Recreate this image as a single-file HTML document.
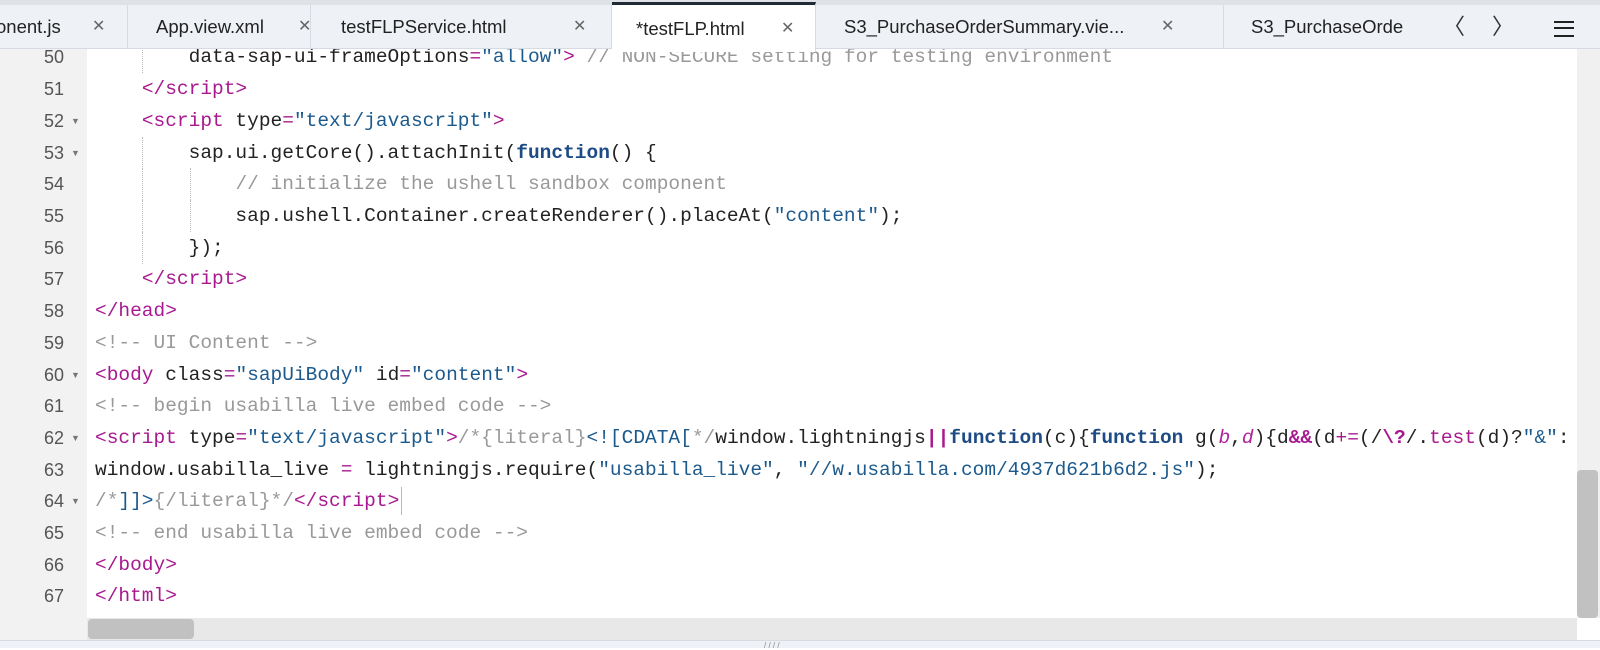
<!DOCTYPE html>
<html><head><meta charset="utf-8"><style>
body{margin:0;width:1600px;height:647px;overflow:hidden;background:#fff;position:relative;font-family:"Liberation Sans",sans-serif}
.top{position:absolute;left:0;top:0;width:1600px;height:5px;background:#dfe3e8}
.tabs{position:absolute;left:0;top:5px;width:1600px;height:43px;background:#eef1f5;border-bottom:1px solid #d6dbe1;z-index:5}
.tab{position:absolute;top:0;height:43px;border-right:1px solid #d6dbe1;font-size:18.5px;color:#222;line-height:43px;white-space:nowrap;overflow:hidden}
.tab .x{color:#666;font-size:16px;position:absolute;top:0}
.act{background:#fff;border-top:3px solid #1f2a36;top:-3px;height:47px;line-height:47px}
.code{position:absolute;left:0;top:41px;width:1577px;height:577px;overflow:hidden}
.gut{position:absolute;left:0;top:0;width:87px;height:577px;background:#f2f2f2}
.ln{position:absolute;left:0;height:32px;line-height:32px;font-family:"Liberation Sans",sans-serif;font-size:18px;color:#555;width:64px;text-align:right}
.fa{position:absolute;left:71px;font-size:9px;color:#777;height:32px;line-height:32px}
.l{position:absolute;left:95px;height:32px;line-height:32px;font-family:"Liberation Mono",monospace;font-size:19.5px;color:#222;white-space:pre}
.t{color:#a8198f}.s{color:#1c5a8d}.c{color:#999}.k{color:#1d4b86;font-weight:bold}.m{color:#a8198f;font-weight:bold}.i{color:#b0219c;font-style:italic}
.g{position:absolute;width:0;border-left:1px dotted #bbb;height:32px}
</style></head><body>
<div class="top"></div>
<div class="tabs">
<div class="tab" style="left:0;width:127px"><span style="position:absolute;left:-4px">onent.js</span><span class="x" style="left:92px">✕</span></div>
<div class="tab" style="left:128px;width:182px"><span style="position:absolute;left:28px">App.view.xml</span><span class="x" style="left:170px">✕</span></div>
<div class="tab" style="left:311px;width:300px"><span style="position:absolute;left:30px">testFLPService.html</span><span class="x" style="left:262px">✕</span></div>
<div class="tab act" style="left:612px;width:203px"><span style="position:absolute;left:24px">*testFLP.html</span><span class="x" style="left:169px">✕</span></div>
<div class="tab" style="left:816px;width:407px"><span style="position:absolute;left:28px">S3_PurchaseOrderSummary.vie...</span><span class="x" style="left:345px">✕</span></div>
<div class="tab" style="left:1224px;width:376px;border:none"><span style="position:absolute;left:27px">S3_PurchaseOrde</span>
<span style="position:absolute;left:219px;font-size:22px;color:#333">〈</span><span style="position:absolute;left:268px;font-size:22px;color:#333">〉</span>
<span style="position:absolute;left:330px;top:16px;width:20px;height:12px;border-top:2px solid #222;border-bottom:2px solid #222"></span><span style="position:absolute;left:330px;top:22px;width:20px;height:2px;background:#222"></span></div>
</div>
<div class="code">
<div class="gut"></div>
<div class="ln" style="top:0">50</div><div class="ln" style="top:32px">51</div><div class="ln" style="top:64px">52</div><div class="fa" style="top:64px">▼</div>
<div class="ln" style="top:96px">53</div><div class="fa" style="top:96px">▼</div><div class="ln" style="top:127px">54</div><div class="ln" style="top:159px">55</div><div class="ln" style="top:191px">56</div><div class="ln" style="top:222px">57</div><div class="ln" style="top:254px">58</div><div class="ln" style="top:286px">59</div><div class="ln" style="top:318px">60</div><div class="fa" style="top:318px">▼</div><div class="ln" style="top:349px">61</div><div class="ln" style="top:381px">62</div><div class="fa" style="top:381px">▼</div><div class="ln" style="top:413px">63</div><div class="ln" style="top:444px">64</div><div class="fa" style="top:444px">▼</div><div class="ln" style="top:476px">65</div><div class="ln" style="top:508px">66</div><div class="ln" style="top:539px">67</div>
<div class="g" style="left:142px;top:0"></div><div class="g" style="left:142px;top:96px"></div><div class="g" style="left:142px;top:127px"></div><div class="g" style="left:142px;top:159px"></div><div class="g" style="left:142px;top:191px"></div><div class="g" style="left:190px;top:127px"></div><div class="g" style="left:190px;top:159px"></div>
<div class="l" style="top:0">        data-sap-ui-frameOptions<span class="t">=</span><span class="s">"allow"</span><span class="t">&gt;</span> <span class="c">// NON-SECURE setting for testing environment</span></div>
<div class="l" style="top:32px">    <span class="t">&lt;/script&gt;</span></div>
<div class="l" style="top:64px">    <span class="t">&lt;script</span> type<span class="t">=</span><span class="s">"text/javascript"</span><span class="t">&gt;</span></div>
<div class="l" style="top:96px">        sap.ui.getCore().attachInit(<span class="k">function</span>() {</div>
<div class="l" style="top:127px">            <span class="c">// initialize the ushell sandbox component</span></div>
<div class="l" style="top:159px">            sap.ushell.Container.createRenderer().placeAt(<span class="s">"content"</span>);</div>
<div class="l" style="top:191px">        });</div>
<div class="l" style="top:222px">    <span class="t">&lt;/script&gt;</span></div>
<div class="l" style="top:254px"><span class="t">&lt;/head&gt;</span></div>
<div class="l" style="top:286px"><span class="c">&lt;!-- UI Content --&gt;</span></div>
<div class="l" style="top:318px"><span class="t">&lt;body</span> class<span class="t">=</span><span class="s">"sapUiBody"</span> id<span class="t">=</span><span class="s">"content"</span><span class="t">&gt;</span></div>
<div class="l" style="top:349px"><span class="c">&lt;!-- begin usabilla live embed code --&gt;</span></div>
<div class="l" style="top:381px"><span class="t">&lt;script</span> type<span class="t">=</span><span class="s">"text/javascript"</span><span class="t">&gt;</span><span class="c">/*{literal}</span><span class="s">&lt;![CDATA[</span><span class="c">*/</span>window.lightningjs<span class="m">||</span><span class="k">function</span>(c){<span class="k">function</span> g(<span class="i">b</span>,<span class="i">d</span>){d<span class="m">&amp;&amp;</span>(d<span class="t">+=</span>(/<span class="m">\?</span>/.<span class="t">test</span>(d)?<span class="s">"&amp;"</span>:</div>
<div class="l" style="top:413px">window.usabilla_live <span class="t">=</span> lightningjs.require(<span class="s">"usabilla_live"</span>, <span class="s">"//w.usabilla.com/4937d621b6d2.js"</span>);</div>
<div class="l" style="top:444px"><span class="c">/*</span><span class="s">]]&gt;</span><span class="c">{/literal}*/</span><span class="t">&lt;/script&gt;</span></div>
<div style="position:absolute;left:401px;top:446px;width:1px;height:28px;background:#9cc3e6"></div>
<div class="l" style="top:476px"><span class="c">&lt;!-- end usabilla live embed code --&gt;</span></div>
<div class="l" style="top:508px"><span class="t">&lt;/body&gt;</span></div>
<div class="l" style="top:539px"><span class="t">&lt;/html&gt;</span></div>
</div>
<div style="position:absolute;left:87px;top:618px;width:1490px;height:22px;background:#e8e8e8"></div>
<div style="position:absolute;left:88px;top:619px;width:106px;height:20px;background:#c1c1c1;border-radius:4px"></div>
<div style="position:absolute;left:0;top:618px;width:87px;height:22px;background:#f2f2f2"></div>
<div style="position:absolute;left:1577px;top:48px;width:23px;height:570px;background:#f0f0f0"></div>
<div style="position:absolute;left:1577px;top:470px;width:21px;height:148px;background:#c1c1c1;border-radius:4px"></div>
<div style="position:absolute;left:0;top:640px;width:1600px;height:7px;background:#eef1f5;border-top:1px solid #d6dbe1"></div>
<div style="position:absolute;left:764px;top:641px;font-size:8px;color:#888;font-family:'Liberation Sans',sans-serif">/ / / /</div>
</body></html>
